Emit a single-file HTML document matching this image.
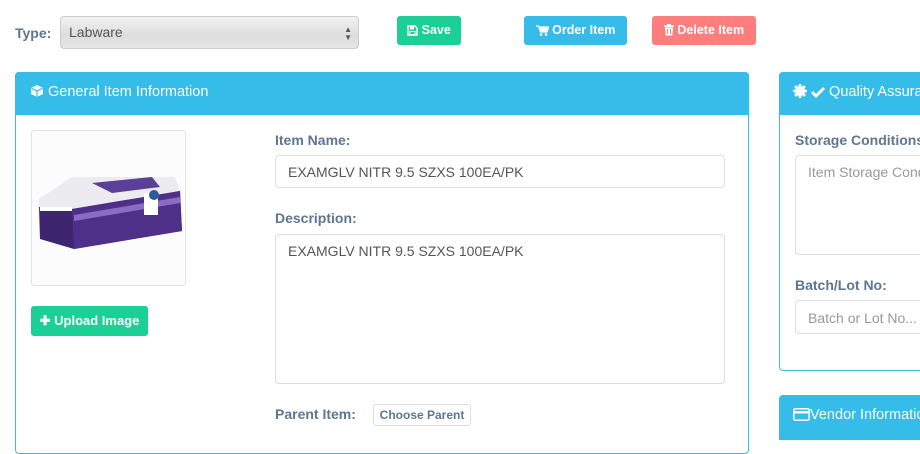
<!DOCTYPE html>
<html><head><style>
body{margin:0;width:920px;height:440px;overflow:hidden;background:#fff;font-family:"Liberation Sans",sans-serif;position:relative}
.a{position:absolute}
.lbl{color:#5f7690;font-weight:bold;font-size:14px}
.btn{position:absolute;color:#fff;font-weight:bold;font-size:12.5px;border-radius:3px;text-align:center;line-height:29px;height:29px}
.btn svg,.hdr svg{vertical-align:-2px}
.inp{position:absolute;border:1px solid #ddd;border-radius:4px;background:#fff;font-size:14px;color:#555;box-sizing:border-box;padding-left:12px}
.hdr{position:absolute;background:#35bce8;color:#fff;font-size:14.5px;border-radius:4px 4px 0 0}
</style></head><body>
<div class="a lbl" style="left:15px;top:25px">Type:</div>
<div class="a" style="left:60px;top:16px;width:299px;height:33px;box-sizing:border-box;border:1px solid #ccc;border-radius:4px;background:linear-gradient(#f2f2f2,#ddd 60%,#e6e6e6);font-size:14px;color:#555;line-height:31px;padding-left:8px">Labware<span style="position:absolute;right:6px;font-size:8px;line-height:8px;top:9px;color:#555">▲<br>▼</span></div>
<div class="btn" style="left:397px;top:16px;width:64px;background:#1ccf94"><svg width="11" height="11" viewBox="0 0 11 11"><path d="M1 1h7l2 2v7H1z" fill="none" stroke="#fff" stroke-width="1.4"/><rect x="3" y="1.5" width="4" height="3" fill="#fff"/><rect x="3" y="6.5" width="5" height="3" fill="none" stroke="#fff"/></svg> Save</div>
<div class="btn" style="left:524px;top:16px;width:103px;background:#35bce8"><svg width="13" height="11" viewBox="0 0 13 11"><path d="M0 1h2.5l2 6h6.5l1.5-5H3.5" fill="#fff" stroke="#fff" stroke-width="1.2"/><circle cx="5" cy="9.5" r="1.3" fill="#fff"/><circle cx="10" cy="9.5" r="1.3" fill="#fff"/></svg> Order Item</div>
<div class="btn" style="left:652px;top:16px;width:104px;background:#fe7e7e"><svg width="10" height="12" viewBox="0 0 10 12"><rect x="0" y="1.5" width="10" height="1.5" fill="#fff"/><rect x="3" y="0" width="4" height="2" fill="#fff"/><path d="M1 3.5h8l-.7 8H1.7z" fill="#fff"/><path d="M3.5 5v5M6.5 5v5" stroke="#fe7e7e"/></svg> Delete Item</div>

<div class="a" style="left:15px;top:72px;width:732px;height:380px;border:1px solid #35bce8;border-radius:4px"></div>
<div class="hdr" style="left:15px;top:72px;width:734px;height:43px;line-height:40px;box-sizing:border-box;padding-left:15px"><svg width="14" height="14" viewBox="0 0 14 14"><path d="M7 1l6 3v6l-6 3-6-3V4z" fill="#fff"/><path d="M1.5 4.3L7 7l5.5-2.7M7 7v6" stroke="#35bce8" stroke-width="1.2" fill="none"/></svg> General Item Information</div>

<div class="a" style="left:31px;top:130px;width:153px;height:154px;border:1px solid #e3e3e3;border-radius:3px;background:#fcfcfc">
<svg width="153" height="154"><polygon points="7,68 40,46 143,46 148,60 40,78 7,76" fill="#ececf0"/><polygon points="7,76 40,78 148,60 150,100 42,118 8,108" fill="#3d2570"/><polygon points="40,78 148,60 150,100 42,118" fill="#4e3088"/><polygon points="42,84 148,66 148,72 42,90" fill="#8a6cc4"/><polygon points="60,52 120,46 128,56 80,62" fill="#5c3f96"/><rect x="112" y="62" width="14" height="22" fill="#fff"/><circle cx="122" cy="64" r="5" fill="#2d5a9c"/><rect x="8" y="76" width="32" height="4" fill="#fff"/></svg>
</div>
<div class="btn" style="left:31px;top:306px;width:117px;height:30px;line-height:30px;background:#1ccf94;font-size:13px">✚ Upload Image</div>

<div class="a lbl" style="left:275px;top:132px">Item Name:</div>
<div class="inp" style="left:275px;top:155px;width:450px;height:33px;line-height:33px">EXAMGLV NITR 9.5 SZXS 100EA/PK</div>
<div class="a lbl" style="left:275px;top:210px">Description:</div>
<div class="inp" style="left:275px;top:234px;width:450px;height:150px;padding-top:8px">EXAMGLV NITR 9.5 SZXS 100EA/PK</div>
<div class="a lbl" style="left:275px;top:406px">Parent Item:</div>
<div class="a" style="left:373px;top:404px;width:98px;height:22px;box-sizing:border-box;border:1px solid #ddd;border-radius:3px;font-size:12px;font-weight:bold;color:#5f7690;text-align:center;line-height:20px">Choose Parent</div>

<div class="a" style="left:779px;top:72px;width:160px;height:297px;border:1px solid #35bce8;border-radius:4px"></div>
<div class="hdr" style="left:779px;top:72px;width:160px;height:43px;line-height:40px;box-sizing:border-box;padding-left:14px;white-space:nowrap"><svg width="14" height="14" viewBox="0 0 14 14"><circle cx="7" cy="7" r="5" fill="#fff"/><g fill="#fff"><circle cx="7" cy="1.5" r="1.5"/><circle cx="7" cy="12.5" r="1.5"/><circle cx="1.5" cy="7" r="1.5"/><circle cx="12.5" cy="7" r="1.5"/><circle cx="3" cy="3" r="1.5"/><circle cx="11" cy="3" r="1.5"/><circle cx="3" cy="11" r="1.5"/><circle cx="11" cy="11" r="1.5"/></g></svg> <svg width="14" height="12" viewBox="0 0 14 12"><path d="M1 6l4 4 8-8" stroke="#fff" stroke-width="3" fill="none"/></svg> Quality Assurance</div>
<div class="a lbl" style="left:795px;top:132px;white-space:nowrap">Storage Conditions:</div>
<div class="inp" style="left:795px;top:155px;width:140px;height:100px;padding-top:8px;color:#999;white-space:nowrap;overflow:hidden">Item Storage Conditions</div>
<div class="a lbl" style="left:795px;top:277px">Batch/Lot No:</div>
<div class="inp" style="left:795px;top:300px;width:140px;height:34px;line-height:34px;color:#999;white-space:nowrap;overflow:hidden">Batch or Lot No...</div>
<div class="hdr" style="left:779px;top:395px;width:160px;height:45px;line-height:40px;box-sizing:border-box;padding-left:14px;white-space:nowrap"><svg width="17" height="13" viewBox="0 0 17 13"><rect x="0.8" y="0.8" width="15.4" height="11.4" rx="1.5" fill="none" stroke="#fff" stroke-width="1.5"/><rect x="1" y="3" width="15" height="2.5" fill="#fff"/></svg>Vendor Information</div>
</body></html>
